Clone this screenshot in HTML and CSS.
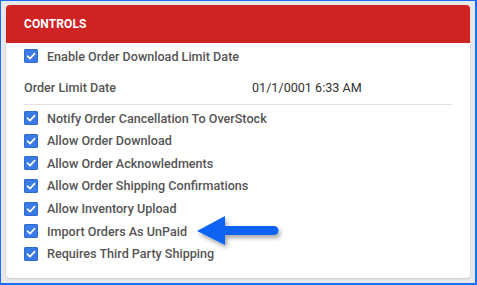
FILE: index.html
```html
<!DOCTYPE html>
<html>
<head>
<meta charset="utf-8">
<link rel="stylesheet" href="styles.css">
</head>
<body>
<div class="frame">
  <div class="card">
    <div class="card-header">CONTROLS</div>
    <div class="card-body">
      <div class="row check-row first"><span class="cb"><svg viewBox="0 0 14 14" width="14" height="14"><path d="M3.5 7.2 L6 9.6 L10.6 4.6" fill="none" stroke="#fff" stroke-width="1.6" stroke-linecap="round" stroke-linejoin="round"/></svg></span><span class="label">Enable Order Download Limit Date</span></div>
      <div class="row field-row"><span class="field-label">Order Limit Date</span><span class="field-value">01/1/0001 6:33 AM</span></div>
      <div class="sep"></div>
      <div class="row check-row"><span class="cb"><svg viewBox="0 0 14 14" width="14" height="14"><path d="M3.5 7.2 L6 9.6 L10.6 4.6" fill="none" stroke="#fff" stroke-width="1.6" stroke-linecap="round" stroke-linejoin="round"/></svg></span><span class="label">Notify Order Cancellation To OverStock</span></div>
      <div class="row check-row"><span class="cb"><svg viewBox="0 0 14 14" width="14" height="14"><path d="M3.5 7.2 L6 9.6 L10.6 4.6" fill="none" stroke="#fff" stroke-width="1.6" stroke-linecap="round" stroke-linejoin="round"/></svg></span><span class="label">Allow Order Download</span></div>
      <div class="row check-row"><span class="cb"><svg viewBox="0 0 14 14" width="14" height="14"><path d="M3.5 7.2 L6 9.6 L10.6 4.6" fill="none" stroke="#fff" stroke-width="1.6" stroke-linecap="round" stroke-linejoin="round"/></svg></span><span class="label">Allow Order Acknowledments</span></div>
      <div class="row check-row"><span class="cb"><svg viewBox="0 0 14 14" width="14" height="14"><path d="M3.5 7.2 L6 9.6 L10.6 4.6" fill="none" stroke="#fff" stroke-width="1.6" stroke-linecap="round" stroke-linejoin="round"/></svg></span><span class="label">Allow Order Shipping Confirmations</span></div>
      <div class="row check-row"><span class="cb"><svg viewBox="0 0 14 14" width="14" height="14"><path d="M3.5 7.2 L6 9.6 L10.6 4.6" fill="none" stroke="#fff" stroke-width="1.6" stroke-linecap="round" stroke-linejoin="round"/></svg></span><span class="label">Allow Inventory Upload</span></div>
      <div class="row check-row"><span class="cb"><svg viewBox="0 0 14 14" width="14" height="14"><path d="M3.5 7.2 L6 9.6 L10.6 4.6" fill="none" stroke="#fff" stroke-width="1.6" stroke-linecap="round" stroke-linejoin="round"/></svg></span><span class="label">Import Orders As UnPaid</span></div>
      <div class="row check-row"><span class="cb"><svg viewBox="0 0 14 14" width="14" height="14"><path d="M3.5 7.2 L6 9.6 L10.6 4.6" fill="none" stroke="#fff" stroke-width="1.6" stroke-linecap="round" stroke-linejoin="round"/></svg></span><span class="label">Requires Third Party Shipping</span></div>
    </div>
  </div>
  <svg class="arrow" width="100" height="50" viewBox="0 0 100 50">
    <defs>
      <filter id="sh" x="-20%" y="-30%" width="150%" height="170%">
        <feDropShadow dx="2" dy="3" stdDeviation="2" flood-color="#000" flood-opacity="0.35"/>
      </filter>
    </defs>
    <g filter="url(#sh)">
      <path d="M6 20 L34 5 L34 15 L83 15 A4.5 4.5 0 0 1 83 24 L34 24 L34 34 Z" fill="#0a63f2"/>
    </g>
  </svg>
</div>
</body>
</html>
```

FILE: styles.css
```css
html, body {
  margin: 0;
  padding: 0;
}
body {
  font-family: Roboto, "Liberation Sans", Arial, sans-serif;
}
.frame {
  position: relative;
  width: 477px;
  height: 285px;
  box-sizing: border-box;
  border-top: 1px solid #1a6ef5;
  border-left: 1px solid #1a6ef5;
  border-right: 2px solid #1a6ef5;
  border-bottom: 2px solid #1a6ef5;
  background: #e8e8e8;
  padding: 4px 5px 5px 5px;
}
.card {
  height: 100%;
  box-sizing: border-box;
  background: #fff;
  border-radius: 4px;
  overflow: hidden;
  box-shadow: 0 1px 2px rgba(0,0,0,0.12);
}
.card-header {
  height: 38px;
  background: #cf2222;
  color: #fff;
  font-weight: 700;
  font-size: 12px;
  display: flex;
  align-items: center;
  padding-left: 18px;
  letter-spacing: 0.1px;
}
.card-body {
  padding: 2px 18px 0 18px;
}
.row {
  height: 22.67px;
  display: flex;
  align-items: center;
}
.cb {
  width: 14px;
  height: 14px;
  border-radius: 2px;
  background: #3b7be6;
  box-shadow: inset 0 0 0 1px #2f6ad0;
  display: flex;
  flex: none;
}
.label {
  margin-left: 9px;
  font-size: 12.6px;
  font-weight: 500;
  color: #555;
}
.field-row {
  margin-top: 9px;
}
.field-label {
  width: 228px;
  font-size: 12.6px;
  font-weight: 500;
  color: #555;
}
.field-value {
  font-size: 12.6px;
  color: #333;
}
.sep {
  height: 1px;
  background: #e2e2e2;
  margin-top: 4.7px;
  margin-bottom: 1.7px;
}
.arrow {
  position: absolute;
  left: 190px;
  top: 210px;
}
```
